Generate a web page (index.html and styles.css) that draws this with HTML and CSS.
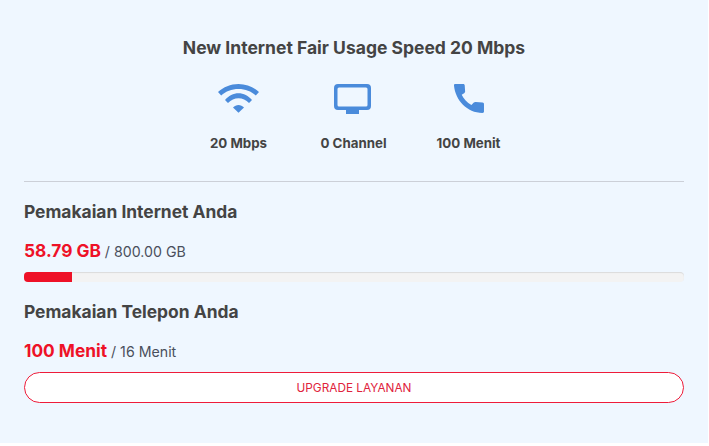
FILE: index.html
```html
<!DOCTYPE html>
<html lang="en">
<head>
    <meta charset="UTF-8">
    <meta name="viewport" content="width=device-width, initial-scale=1.0">
    <title>Pemakaian Layanan</title>
    <link rel="stylesheet" href="styles.css">
</head>
<body>
    <div class="panel">
        <h1 class="plan-title">New Internet Fair Usage Speed 20 Mbps</h1>
        <div class="features">
            <div class="feature">
                <svg class="icon" width="41" height="30" viewBox="0 0 41 30">
                    <path d="M0 8C5.500 3 12.500 0 20.500 0S35.500 3 41 8L37.800 11.500C33 7.300 27.500 5 20.500 5S8 7.300 3.200 11.500Z"/>
                    <path d="M7 16C10.500 12 15.500 9.300 20.500 9.300S30.500 12 34 16L31 19C28 16 24.500 14.300 20.500 14.300S13 16 10 19Z"/>
                    <path d="M15 23.500C16.500 22 18.500 21 20.500 21S24.500 22 26 23.500L20.500 28.800Z"/>
                </svg>
                <span class="feature-label">20 Mbps</span>
            </div>
            <div class="feature">
                <svg class="icon" width="39" height="30" viewBox="0 0 39 30">
                    <path fill-rule="evenodd" d="M4 0H33A4 4 0 0 1 37 4V22A4 4 0 0 1 33 26H25V30H12V26H4A4 4 0 0 1 0 22V4A4 4 0 0 1 4 0ZM5 3.500A1.500 1.500 0 0 0 3.500 5V21A1.500 1.500 0 0 0 5 22.500H32A1.500 1.500 0 0 0 33.500 21V5A1.500 1.500 0 0 0 32 3.500Z"/>
                </svg>
                <span class="feature-label">0 Channel</span>
            </div>
            <div class="feature">
                <svg class="icon" width="31" height="30" viewBox="-1 0 32 31">
                    <path d="M1.500 0H9.500C10.500 0 11 .6 11.100 1.500L11.500 7.500C11.600 8.400 11.200 9 10.500 9.500L8 11.200C10 15.500 13.500 19.500 18 21.800L20.500 19.200C21 18.600 21.700 18.400 22.500 18.500L29.500 19.200C30.600 19.300 31 20 31 21V28.500C31 29.500 30.400 30 29.400 30C13.500 29.500 1.500 17 0 1.500C0 .5.500 0 1.500 0Z"/>
                </svg>
                <span class="feature-label">100 Menit</span>
            </div>
        </div>
        <hr class="divider">
        <h2 class="usage-title">Pemakaian Internet Anda</h2>
        <p class="usage-line"><span class="usage-value">58.79 GB</span> / 800.00 GB</p>
        <div class="progress"><div class="progress-bar" style="width: 7.2%"></div></div>
        <h2 class="usage-title usage-title-phone">Pemakaian Telepon Anda</h2>
        <p class="usage-line"><span class="usage-value">100 Menit</span> / 16 Menit</p>
        <button class="upgrade-btn">UPGRADE LAYANAN</button>
    </div>
</body>
</html>
```

FILE: styles.css
```css
body {
    margin: 0;
    background-color: #fff;
    font-family: Inter, "Liberation Sans", sans-serif;
    color: #444;
}
.panel {
    box-sizing: border-box;
    width: 708px;
    height: 443px;
    padding: 37px 24px 0;
    background-color: #eff7ff;
}
.plan-title {
    margin: 0;
    font-size: 17.5px;
    line-height: 22px;
    font-weight: 700;
    text-align: center;
}
.features {
    display: flex;
    justify-content: center;
    margin-top: 25px;
    padding-right: 1px;
}
.feature {
    display: flex;
    flex-direction: column;
    align-items: center;
    width: 115px;
}
.icon {
    display: block;
    fill: #4a8bdb;
}
.feature-label {
    margin-top: 20px;
    font-size: 13.3px;
    line-height: 18px;
    font-weight: 700;
}
.divider {
    height: 1px;
    margin: 29px 0 0;
    border: none;
    background-color: #ccd0d8;
}
.usage-title {
    margin: 19px 0 0;
    font-size: 17.4px;
    line-height: 22px;
    font-weight: 700;
}
.usage-title-phone {
    margin-top: 19px;
}
.usage-line {
    margin: 16px 0 0;
    font-size: 14.2px;
    line-height: 24px;
    color: #4a4f5c;
}
.usage-value {
    font-size: 17.3px;
    font-weight: 700;
    color: #ee1127;
}
.progress {
    height: 10px;
    margin-top: 8px;
    border-radius: 4px;
    background-color: #f3f3f3;
    box-shadow: inset 0 1px 1px rgba(0, 0, 0, 0.1);
    overflow: hidden;
}
.progress-bar {
    height: 100%;
    background-color: #ee1127;
}
.upgrade-btn {
    display: block;
    width: 100%;
    height: 31px;
    margin-top: 8px;
    padding: 0;
    border: 1px solid #ee1c3a;
    border-radius: 16px;
    background-color: #fff;
    color: #e0233c;
    font-family: inherit;
    font-size: 11.8px;
}
```
